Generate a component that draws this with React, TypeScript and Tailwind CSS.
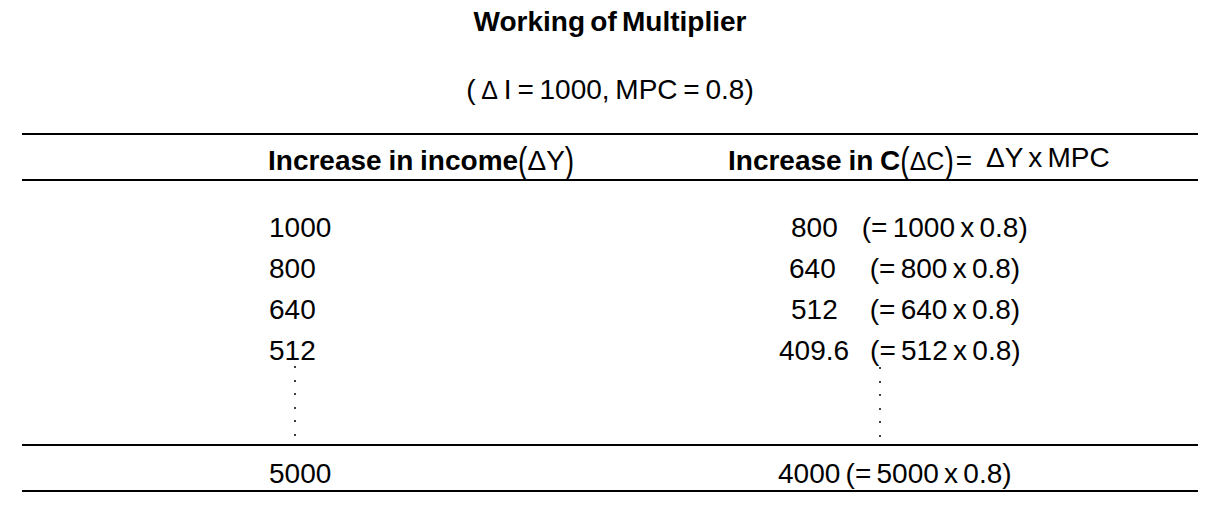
import React from "react";

const Dots = () => (
  <div className="flex flex-col gap-[11.5px]">
    {[0, 1, 2, 3, 4, 5].map((i) => (
      <div key={i} className="w-[2px] h-[2px] bg-black rounded-full" />
    ))}
  </div>
);

const Paren = ({ ch }: { ch: string }) => (
  <span className="inline-block font-normal scale-y-[1.3] origin-center">{ch}</span>
);

type RowProps = { left: string; num: string; pl: string; gap: string; expr: string };

const rows: RowProps[] = [
  { left: "1000", num: "800", pl: "pl-[71px]", gap: "ml-[24px]", expr: "(= 1000 x 0.8)" },
  { left: "800", num: "640", pl: "pl-[69px]", gap: "ml-[34px]", expr: "(= 800 x 0.8)" },
  { left: "640", num: "512", pl: "pl-[71px]", gap: "ml-[32px]", expr: "(= 640 x 0.8)" },
  { left: "512", num: "409.6", pl: "pl-[59px]", gap: "ml-[21px]", expr: "(= 512 x 0.8)" },
];

export default function App() {
  return (
    <div
      className="w-[1220px] h-[510px] bg-white text-black overflow-hidden text-[28px] [word-spacing:-2.5px]"
      style={{ fontFamily: '"Liberation Sans", Arial, sans-serif' }}
    >
      <div className="pt-[6px] text-center font-bold leading-[32px]">Working of Multiplier</div>
      <div className="mt-[36px] text-center leading-[32px] [word-spacing:-2px]">
        ( <span className="text-[25px]">Δ</span> I = 1000, MPC = 0.8)
      </div>

      <div className="mx-[22px] mt-[27px] border-t-[2px] border-black">
        {/* header */}
        <div className="flex h-[46px] pt-[10px] leading-[32px] border-b-[2px] border-black">
          <div className="w-[698px] pl-[246px] font-bold whitespace-nowrap [word-spacing:-1px]">
            Increase in income
            <Paren ch="(" />
            <span className="font-normal">ΔY</span>
            <Paren ch=")" />
          </div>
          <div className="pl-[8px] whitespace-nowrap flex items-start">
            <span className="font-bold [word-spacing:-1px]">Increase in C</span>
            <Paren ch="(" />
            <span className="text-[25px]">ΔC</span>
            <Paren ch=")" />
            <span className="ml-[2px]">=</span>
            <span className="ml-[14px] -mt-[3px]">ΔY x MPC</span>
          </div>
        </div>

        {/* body */}
        <div className="pt-[26px]">
          {rows.map((r) => (
            <div key={r.left} className="flex h-[41px] leading-[41px]">
              <div className="w-[698px] pl-[247px]">{r.left}</div>
              <div className={`${r.pl} flex whitespace-nowrap`}>
                <span>{r.num}</span>
                <span className={r.gap}>{r.expr}</span>
              </div>
            </div>
          ))}
          <div className="flex -mt-[5px] pb-[7px]">
            <div className="w-[698px] pl-[272px]">
              <Dots />
            </div>
            <div className="pl-[159px] pt-[1px]">
              <Dots />
            </div>
          </div>
        </div>

        {/* total */}
        <div className="flex h-[48px] pt-[12px] leading-[32px] border-t-[2px] border-b-[2px] border-black">
          <div className="w-[698px] pl-[247px]">5000</div>
          <div className="pl-[58px] whitespace-nowrap">4000 (= 5000 x 0.8)</div>
        </div>
      </div>
    </div>
  );
}
